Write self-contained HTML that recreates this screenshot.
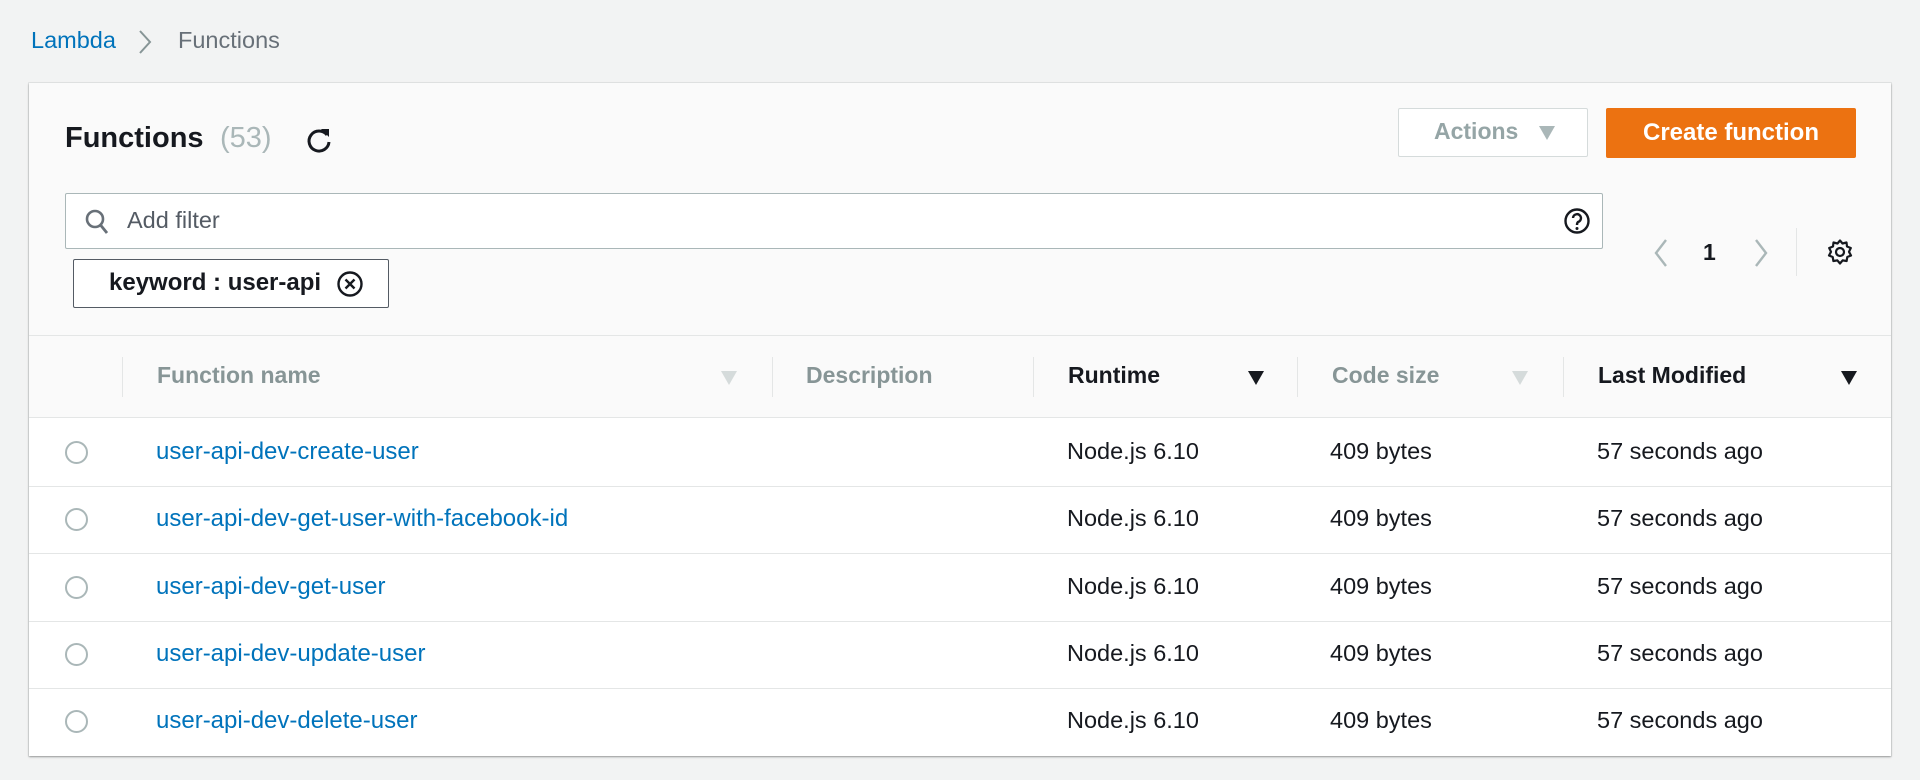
<!DOCTYPE html>
<html><head><meta charset="utf-8"><style>
*{box-sizing:border-box;margin:0;padding:0}
body{width:1920px;height:780px;background:#f2f3f3;font-family:"Liberation Sans",sans-serif;position:relative;overflow:hidden;color:#16191f}
.a{position:absolute;white-space:nowrap}
.panel{position:absolute;left:29px;top:83px;width:1862px;height:673px;background:#fafafa;box-shadow:0 1px 2px rgba(0,0,0,.35),0 0 0 1px #e4e6e6}
.rows{position:absolute;left:29px;top:417px;width:1862px;height:339px;background:#fff}
.line{position:absolute;left:29px;width:1862px;height:1px;background:#e4e6e6}
.vd{position:absolute;width:1px;height:40px;top:357px;background:#e4e6e6}
.th{font-weight:bold;font-size:23px;top:362px}
.tri{position:absolute;width:0;height:0;border-left:8px solid transparent;border-right:8px solid transparent;border-top:14px solid #16191f;top:371px}
.tri.g{border-top-color:#d5dbdb}
.td{font-size:23.5px;color:#16191f}
.lk{color:#0073bb;font-size:24px}
.rad{position:absolute;left:65px;width:23px;height:23px;border:2px solid #aab7b8;border-radius:50%;background:#fff}
</style></head><body>
<div class="a" style="left:31px;top:27px;font-size:23.5px;color:#0073bb">Lambda</div>
<svg class="a" style="left:138px;top:29px" width="14" height="26"><path d="M2 2 L12 13 L2 24" fill="none" stroke="#879596" stroke-width="2"/></svg>
<div class="a" style="left:178px;top:27px;font-size:23.5px;color:#687078">Functions</div>

<div class="panel"></div>
<div class="rows"></div>
<div class="a" style="left:65px;top:122px;font-size:29px;font-weight:bold">Functions</div>
<div class="a" style="left:220px;top:122px;font-size:29px;color:#aab7b8">(53)</div>
<svg class="a" style="left:304px;top:126px" width="30" height="30" viewBox="0 0 30 30"><path d="M23 9 A10 10 0 1 0 25 16" fill="none" stroke="#16191f" stroke-width="3"/><path d="M17 3 L25 3 L25 11 Z" fill="#16191f"/></svg>

<div class="a" style="left:1398px;top:108px;width:190px;height:49px;background:#fff;border:1px solid #d5dbdb;border-radius:2px"></div>
<div class="a" style="left:1434px;top:118px;font-size:23px;font-weight:bold;color:#95a5a6">Actions</div>
<div class="a" style="left:1539px;top:126px;width:0;height:0;border-left:8px solid transparent;border-right:8px solid transparent;border-top:14px solid #aab7b8"></div>
<div class="a" style="left:1606px;top:108px;width:250px;height:50px;background:#ec7211;border-radius:2px;color:#fff;font-size:24px;font-weight:bold;text-align:center;line-height:50px">Create function</div>

<div class="a" style="left:65px;top:193px;width:1538px;height:56px;background:#fff;border:1px solid #aab7b8;border-radius:2px"></div>
<svg class="a" style="left:84px;top:208px" width="26" height="28" viewBox="0 0 26 28"><circle cx="11" cy="11" r="8" fill="none" stroke="#687078" stroke-width="2.6"/><path d="M16.5 17 L23 25" stroke="#687078" stroke-width="2.8"/></svg>
<div class="a" style="left:127px;top:207px;font-size:23.5px;color:#545b64">Add filter</div>
<svg class="a" style="left:1563px;top:207px" width="28" height="28" viewBox="0 0 28 28"><circle cx="14" cy="14" r="11.5" fill="none" stroke="#16191f" stroke-width="2.4"/><path d="M10 11 A4 4 0 1 1 15 15 Q14 16 14 18" fill="none" stroke="#16191f" stroke-width="2.4"/><circle cx="14" cy="21.5" r="1.5" fill="#16191f"/></svg>

<div class="a" style="left:73px;top:259px;width:316px;height:49px;background:#fff;border:1.5px solid #545b64;border-radius:2px"></div>
<div class="a" style="left:109px;top:269px;font-size:24px;font-weight:bold">keyword : user-api</div>
<svg class="a" style="left:336px;top:270px" width="28" height="28" viewBox="0 0 28 28"><circle cx="14" cy="14" r="11.5" fill="none" stroke="#16191f" stroke-width="2.4"/><path d="M9.5 9.5 L18.5 18.5 M18.5 9.5 L9.5 18.5" stroke="#16191f" stroke-width="2.4"/></svg>

<svg class="a" style="left:1652px;top:238px" width="18" height="30"><path d="M14 2 L4 15 L14 28" fill="none" stroke="#aab7b8" stroke-width="2.4"/></svg>
<div class="a" style="left:1703px;top:239px;font-size:23px;font-weight:bold">1</div>
<svg class="a" style="left:1752px;top:238px" width="18" height="30"><path d="M4 2 L14 15 L4 28" fill="none" stroke="#aab7b8" stroke-width="2.4"/></svg>
<div class="a" style="left:1796px;top:228px;width:1px;height:48px;background:#e4e6e6"></div>
<svg class="a" style="left:1826px;top:238px" width="28" height="28" viewBox="0 0 28 28"><path d="M14 2.5 L16.5 5.5 L20.5 4.5 L21 8.5 L24.8 10 L23 13.8 L25 17.5 L21.3 19 L20.6 23 L16.6 22.4 L14 25.5 L11.4 22.4 L7.4 23 L6.7 19 L3 17.5 L5 13.8 L3.2 10 L7 8.5 L7.5 4.5 L11.5 5.5 Z" fill="none" stroke="#16191f" stroke-width="2.2" stroke-linejoin="round"/><circle cx="14" cy="14" r="4" fill="none" stroke="#16191f" stroke-width="2.2"/></svg>

<div class="line" style="top:335px"></div>
<div class="vd" style="left:122px"></div>
<div class="a th" style="left:157px;color:#879596">Function name</div>
<div class="tri g" style="left:721px"></div>
<div class="vd" style="left:772px"></div>
<div class="a th" style="left:806px;color:#879596">Description</div>
<div class="vd" style="left:1033px"></div>
<div class="a th" style="left:1068px">Runtime</div>
<div class="tri" style="left:1248px"></div>
<div class="vd" style="left:1297px"></div>
<div class="a th" style="left:1332px;color:#879596">Code size</div>
<div class="tri g" style="left:1512px"></div>
<div class="vd" style="left:1563px"></div>
<div class="a th" style="left:1598px">Last Modified</div>
<div class="tri" style="left:1841px"></div>
<div class="line" style="top:417px"></div>

<div class="rad" style="top:441px"></div>
<div class="a lk" style="left:156px;top:438px">user-api-dev-create-user</div>
<div class="a td" style="left:1067px;top:438px">Node.js 6.10</div>
<div class="a td" style="left:1330px;top:438px">409 bytes</div>
<div class="a td" style="left:1597px;top:438px">57 seconds ago</div>
<div class="line" style="top:486px"></div>

<div class="rad" style="top:508px"></div>
<div class="a lk" style="left:156px;top:505px">user-api-dev-get-user-with-facebook-id</div>
<div class="a td" style="left:1067px;top:505px">Node.js 6.10</div>
<div class="a td" style="left:1330px;top:505px">409 bytes</div>
<div class="a td" style="left:1597px;top:505px">57 seconds ago</div>
<div class="line" style="top:553px"></div>

<div class="rad" style="top:576px"></div>
<div class="a lk" style="left:156px;top:573px">user-api-dev-get-user</div>
<div class="a td" style="left:1067px;top:573px">Node.js 6.10</div>
<div class="a td" style="left:1330px;top:573px">409 bytes</div>
<div class="a td" style="left:1597px;top:573px">57 seconds ago</div>
<div class="line" style="top:621px"></div>

<div class="rad" style="top:643px"></div>
<div class="a lk" style="left:156px;top:640px">user-api-dev-update-user</div>
<div class="a td" style="left:1067px;top:640px">Node.js 6.10</div>
<div class="a td" style="left:1330px;top:640px">409 bytes</div>
<div class="a td" style="left:1597px;top:640px">57 seconds ago</div>
<div class="line" style="top:688px"></div>

<div class="rad" style="top:710px"></div>
<div class="a lk" style="left:156px;top:707px">user-api-dev-delete-user</div>
<div class="a td" style="left:1067px;top:707px">Node.js 6.10</div>
<div class="a td" style="left:1330px;top:707px">409 bytes</div>
<div class="a td" style="left:1597px;top:707px">57 seconds ago</div>
</body></html>
